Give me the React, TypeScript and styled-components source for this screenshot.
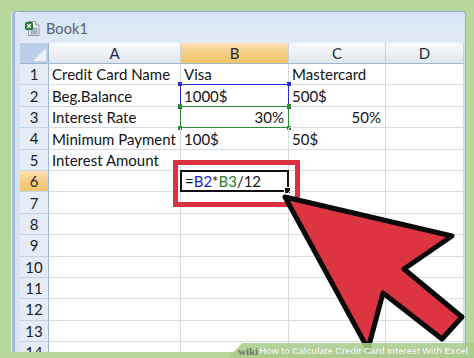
import React from "react";
import styled, { createGlobalStyle, css } from "styled-components";

const GlobalStyle = createGlobalStyle`
  html, body { margin: 0; padding: 0; background: #b6d69c; }
  body { font-family: Lato, "Liberation Sans", sans-serif; }
`;

const Stage = styled.div`
  position: relative;
  width: 474px;
  height: 358px;
  overflow: hidden;
  background: #b6d69c;
  padding: 11px 8px 0 12px;
  box-sizing: border-box;
`;

const Window = styled.div`
  width: 454px;
  height: 341px;
  box-sizing: border-box;
  display: flex;
  flex-direction: column;
  border: 1px solid #8ea8cb;
  border-bottom: none;
  border-left: 3px solid #a3bbdf;
  border-radius: 4px 4px 0 0;
  background: linear-gradient(#dbe7f5, #d3e1f2 30%, #dbe6f4);
  box-shadow: -1px 0 0 #e4eef0, inset 0 1px 0 #f3f7fc;
  padding: 0 1px 0 5px;
`;

const TitleBar = styled.div`
  height: 31px;
  flex: none;
  display: flex;
  align-items: center;
  gap: 5px;
  padding: 3px 0 0 5px;
  box-sizing: border-box;
  border-bottom: 1px solid #e6eef8;
  background: linear-gradient(#d6e3f3, #e1ebf7);
`;

const Title = styled.span`
  font-size: 14.5px;
  color: #56626f;
  letter-spacing: 0.1px;
`;

const Sheet = styled.div`
  flex: 1;
  display: grid;
  grid-template-columns: 29px 132px 108px 97px 1fr;
  grid-template-rows: 21px repeat(14, 21.4px);
  overflow: hidden;
  background: #fff;
`;

const Corner = styled.div`
  background: #bccfe9;
  border-right: 1px solid #9eb6ce;
  border-bottom: 1px solid #9eb6ce;
  position: relative;
  overflow: hidden;
  &::after {
    content: "";
    position: absolute;
    right: 2px;
    bottom: 2px;
    width: 0;
    height: 0;
    border-left: 13px solid transparent;
    border-bottom: 13px solid #eef2f7;
  }
`;

const orange = css`
  background: linear-gradient(#fbe2b3, #f6cf89 45%, #f2c36a);
  color: #2a2a2a;
`;

const ColHeader = styled.div<{ $active?: boolean }>`
  display: flex;
  align-items: center;
  justify-content: center;
  font-size: 15px;
  color: #1e2c40;
  background: linear-gradient(#f7f9fb, #eef1f5 50%, #dfe5ec);
  border-right: 1px solid #c7d2de;
  border-bottom: 1px solid #9eb6ce;
  box-sizing: border-box;
  ${(p) => p.$active && orange}
`;

const RowHeader = styled.div<{ $active?: boolean }>`
  display: flex;
  align-items: center;
  justify-content: center;
  font-size: 15px;
  color: #1d1d1d;
  background: #e4ecf7;
  border-right: 1px solid #9eb6ce;
  border-bottom: 1px solid #c5d4e6;
  box-sizing: border-box;
  ${(p) => p.$active && orange}
`;

const Cell = styled.div<{ $right?: boolean }>`
  position: relative;
  display: flex;
  align-items: flex-end;
  justify-content: ${(p) => (p.$right ? "flex-end" : "flex-start")};
  padding: 0 ${(p) => (p.$right ? "4px" : "2px")} 1px 3px;
  box-sizing: border-box;
  font-size: 15px;
  color: #141414;
  white-space: nowrap;
  border-right: 1px solid #d7dce3;
  border-bottom: 1px solid #d7dce3;
  min-width: 0;
`;

const CellText = styled.span`
  overflow: hidden;
`;

const RefBox = styled.div<{ $color: string }>`
  position: absolute;
  left: -1px;
  top: -1px;
  right: -1px;
  bottom: -1px;
  border: 1px solid ${(p) => p.$color};
  pointer-events: none;
`;

const Knob = styled.span<{ $color: string; $x: "l" | "r"; $y: "t" | "b" }>`
  position: absolute;
  width: 4px;
  height: 4px;
  background: ${(p) => p.$color};
  ${(p) => (p.$x === "l" ? "left: -3px;" : "right: -3px;")}
  ${(p) => (p.$y === "t" ? "top: -3px;" : "bottom: -3px;")}
`;

const ActiveBox = styled.div`
  position: absolute;
  left: -1px;
  top: -1px;
  right: -1px;
  bottom: -1px;
  border: 2px solid #111;
  pointer-events: none;
  &::after {
    content: "";
    position: absolute;
    right: -4px;
    bottom: -4px;
    width: 5px;
    height: 5px;
    background: #111;
    border: 1px solid #fff;
  }
`;

const Formula = styled.span`
  padding-left: 1px;
  color: #141414;
`;

const Ref = styled.span<{ $color: string }>`
  color: ${(p) => p.$color};
`;

const Callout = styled.div`
  position: absolute;
  left: 173px;
  top: 160px;
  width: 127px;
  height: 47px;
  box-sizing: border-box;
  border: 5px solid #d8313f;
  pointer-events: none;
`;

const ArrowLayer = styled.svg`
  position: absolute;
  left: 0;
  top: 0;
  width: 474px;
  height: 358px;
  pointer-events: none;
`;

const Banner = styled.div`
  position: absolute;
  right: 0;
  bottom: 0;
  width: 246px;
  height: 15px;
  display: flex;
  align-items: center;
  padding-left: 10px;
  box-sizing: border-box;
  background: rgba(170, 205, 140, 0.88);
  clip-path: polygon(14px 0, 100% 0, 100% 100%, 0 100%);
  font-family: "Liberation Sans", Arial, sans-serif;
  font-weight: bold;
  font-size: 9.5px;
  letter-spacing: -0.2px;
  white-space: nowrap;
  color: #f4f8ee;
  text-shadow: 0 0 1px rgba(90, 120, 70, 0.6);
`;

const Wiki = styled.span`
  color: #6f7466;
  font-family: "Liberation Serif", serif;
  font-size: 11px;
  letter-spacing: 0;
  margin-right: 1px;
  text-shadow: none;
`;

const ExcelIcon = () => (
  <svg width="16" height="17" viewBox="0 0 16 17">
    <path d="M3.5 1.5h7l3.5 3.5v10.5h-10.5z" fill="#f4f6f8" stroke="#8d98a5" />
    <path d="M10.5 1.5v3.5h3.5" fill="#dfe4ea" stroke="#8d98a5" />
    <rect x="6" y="8" width="6" height="6" fill="#d3dce8" stroke="#7f93ad" strokeWidth="0.8" />
    <path d="M6 10h6M6 12h6M9 8v6" stroke="#7f93ad" strokeWidth="0.8" />
    <rect x="0.5" y="2.5" width="7" height="7" rx="1" fill="#2f8a3c" stroke="#1f6a2b" />
    <path d="M2.3 4.3l3.4 3.4M5.7 4.3l-3.4 3.4" stroke="#fff" strokeWidth="1.3" />
  </svg>
);

type Row = { a?: string; b?: React.ReactNode; c?: string; right?: boolean };

const rows: Row[] = [
  { a: "Credit Card Name", b: "Visa", c: "Mastercard" },
  { a: "Beg.Balance", b: "1000$", c: "500$" },
  { a: "Interest Rate", b: "30%", c: "50%", right: true },
  { a: "Minimum Payment", b: "100$", c: "50$" },
  { a: "Interest Amount" },
  {},
  {}, {}, {}, {}, {}, {}, {}, {},
];

const corners: Array<["l" | "r", "t" | "b"]> = [
  ["l", "t"],
  ["r", "t"],
  ["l", "b"],
  ["r", "b"],
];

const RefHighlight = ({ color }: { color: string }) => (
  <RefBox $color={color}>
    {corners.map(([x, y]) => (
      <Knob key={x + y} $color={color} $x={x} $y={y} />
    ))}
  </RefBox>
);

export default function App() {
  return (
    <>
      <GlobalStyle />
      <Stage>
        <Window>
          <TitleBar>
            <ExcelIcon />
            <Title>Book1</Title>
          </TitleBar>
          <Sheet>
            <Corner />
            {["A", "B", "C", "D"].map((l) => (
              <ColHeader key={l} $active={l === "B"}>
                {l}
              </ColHeader>
            ))}
            {rows.map((r, i) => {
              const n = i + 1;
              return (
                <React.Fragment key={n}>
                  <RowHeader $active={n === 6}>{n}</RowHeader>
                  <Cell>
                    <CellText>{r.a}</CellText>
                  </Cell>
                  <Cell $right={r.right}>
                    {n === 6 ? (
                      <>
                        <Formula>
                          =<Ref $color="#2323c9">B2</Ref>*<Ref $color="#2a7d2e">B3</Ref>/12
                        </Formula>
                        <ActiveBox />
                      </>
                    ) : (
                      <CellText>{r.b}</CellText>
                    )}
                    {n === 2 && <RefHighlight color="#2b2bd0" />}
                    {n === 3 && <RefHighlight color="#2e8a36" />}
                  </Cell>
                  <Cell $right={r.right}>
                    <CellText>{r.c}</CellText>
                  </Cell>
                  <Cell />
                </React.Fragment>
              );
            })}
          </Sheet>
        </Window>
        <Callout />
        <ArrowLayer viewBox="0 0 474 358">
          <polygon
            points="285,197 452,236 404,269 462,317 442,339 383,293 368,349"
            fill="#dc3441"
            stroke="#0a0a0a"
            strokeWidth="5"
            strokeLinejoin="round"
          />
        </ArrowLayer>
        <Banner>
          <Wiki>wiki</Wiki>How to Calculate Credit Card Interest With Excel
        </Banner>
      </Stage>
    </>
  );
}
